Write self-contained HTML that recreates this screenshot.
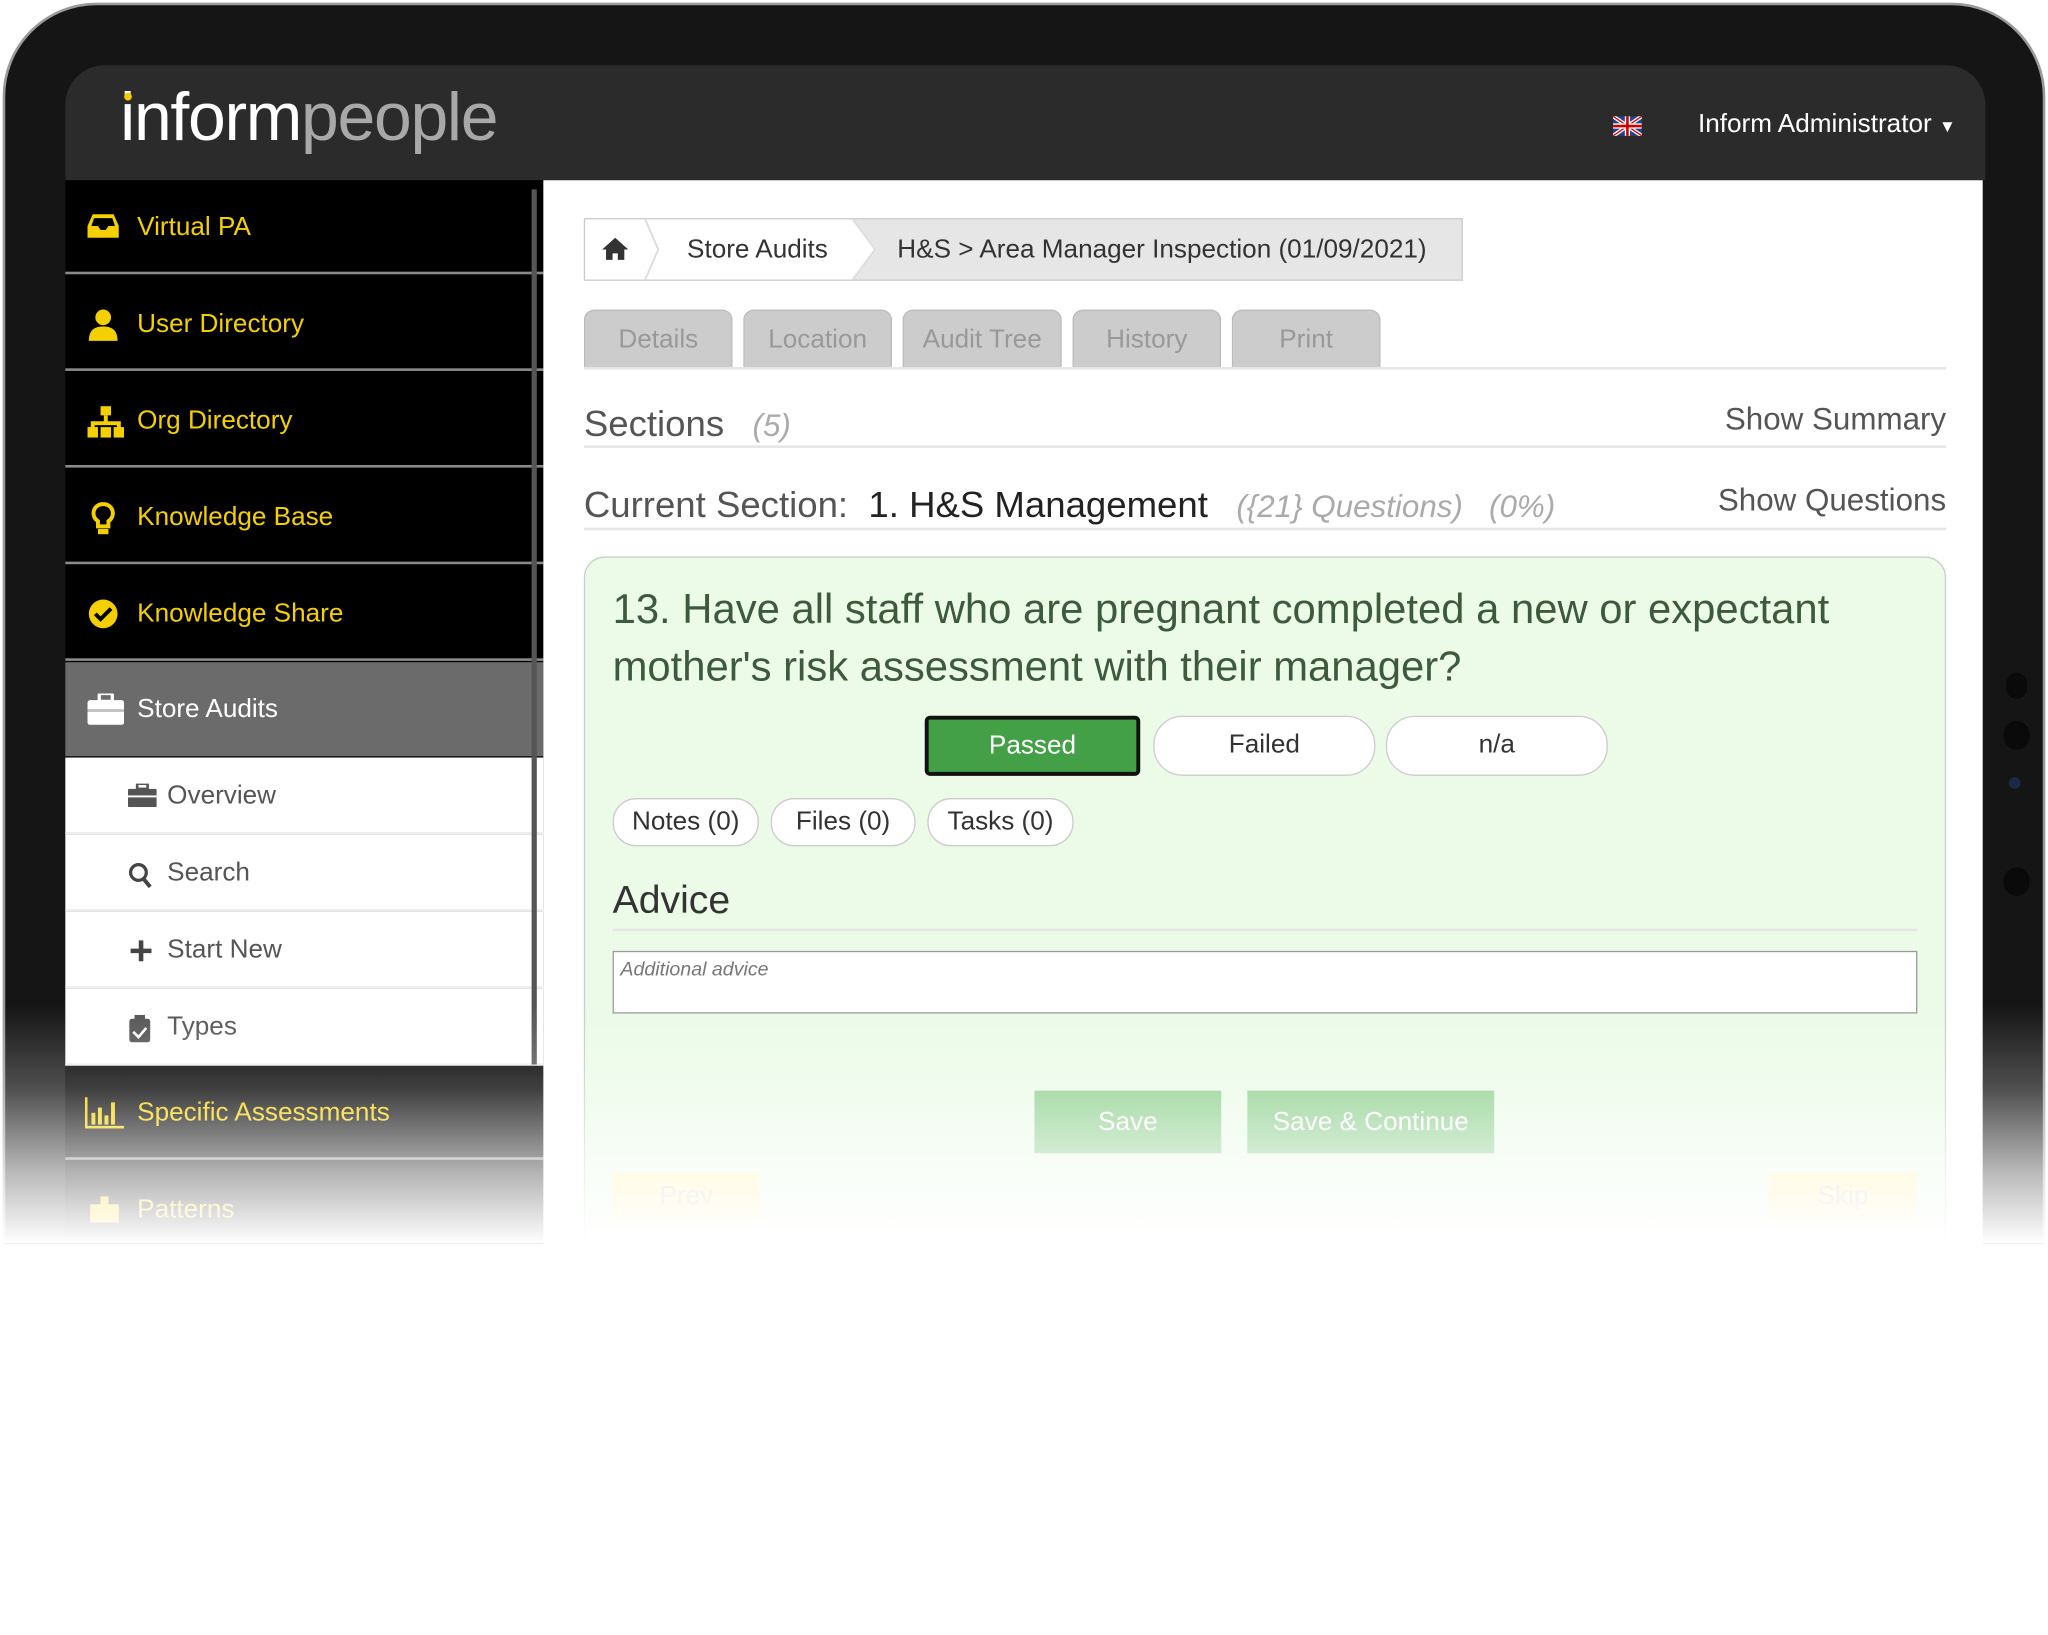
<!DOCTYPE html>
<html><head><meta charset="utf-8"><style>
*{box-sizing:border-box;margin:0;padding:0}
html,body{width:2048px;height:1632px;overflow:hidden;background:#fff;font-family:"Liberation Sans",sans-serif}
#s{position:absolute;left:0;top:0;width:1568px;height:1250px;transform:scale(1.30612);transform-origin:0 0}
.a{position:absolute}
.dev{left:2px;top:2px;width:1564px;height:1100px;background:#151515;border-radius:72px;border:2px solid #9a9a9a}
.hdr{left:50px;top:50px;width:1470px;height:88px;background:#2b2b2b;border-radius:30px 30px 0 0}
.side{left:50px;top:138px;width:366px;height:900px;background:#000}
.it{position:absolute;left:50px;width:366px;height:72px;color:#f5d000;font-size:20px;line-height:72px;padding-left:55px;border-bottom:2px solid #8a8a8a}
.it svg{position:absolute;left:17px;top:24px}
.sub{position:absolute;left:50px;width:366px;height:59px;background:#fff;color:#555;font-size:20px;line-height:58px;padding-left:78px;border-bottom:2px solid #eee}
.sub svg{position:absolute;left:48px;top:20px}
.main{left:416px;top:138px;width:1102px;height:900px;background:#fff}
.tab{position:absolute;top:237px;height:45px;background:#ccc;border:1px solid #bbb;border-bottom:none;border-radius:8px 8px 0 0;color:#999;font-size:20px;text-align:center;line-height:45px}
.btn{position:absolute;top:548px;height:46px;border:1.5px solid #ccc;border-radius:22px;background:#fff;color:#333;font-size:20px;text-align:center;line-height:43px}
.pill{position:absolute;top:611px;height:37px;border:1.5px solid #ccc;border-radius:18px;background:#fff;color:#333;font-size:20px;text-align:center;line-height:34px}
.line{position:absolute;height:2px;background:#e6e6e6}
</style></head><body><div id="s">
<div class="a dev"></div>
<div class="a" style="left:1536px;top:515px;width:16px;height:20px;border-radius:8px;background:#0a0a0a"></div>
<div class="a" style="left:1534px;top:552px;width:20px;height:22px;border-radius:10px;background:#0a0a0a"></div>
<div class="a" style="left:1538px;top:595px;width:9px;height:9px;border-radius:5px;background:#1a2a44"></div>
<div class="a" style="left:1534px;top:664px;width:20px;height:22px;border-radius:10px;background:#0a0a0a"></div>
<div class="a hdr"></div>
<div class="a" style="left:92px;top:60px;font-size:52px;font-weight:300;color:#fff;letter-spacing:-1px">inform<span style="color:#a8a8a8">people</span></div>
<div class="a" style="left:95px;top:71px;width:6px;height:6px;border-radius:3px;background:#f5c800"></div>
<svg class="a" style="left:1235px;top:89px" width="22" height="15" viewBox="0 0 22 15"><rect width="22" height="15" fill="#27408b"/><path d="M0 0L22 15M22 0L0 15" stroke="#fff" stroke-width="3"/><path d="M0 0L22 15M22 0L0 15" stroke="#c00" stroke-width="1"/><path d="M11 0V15M0 7.5H22" stroke="#fff" stroke-width="4"/><path d="M11 0V15M0 7.5H22" stroke="#c00" stroke-width="2"/></svg>
<div class="a" style="left:1300px;top:84px;font-size:20px;color:#fff">Inform Administrator <span style="font-size:13px">▼</span></div>
<div class="a side"></div>
<div class="it" style="top:138px"><svg width="24" height="22" viewBox="0 0 24 22"><path d="M4 2h16l4 9v9H0v-9z" fill="#f5d000"/><path d="M5 5h14l2 6h-5l-2 3h-4l-2-3H3z" fill="#000"/></svg>Virtual PA</div>
<div class="it" style="top:212px"><svg width="24" height="26" viewBox="0 0 24 26"><circle cx="12" cy="7" r="6" fill="#f5d000"/><path d="M1 25c0-8 4-11 11-11s11 3 11 11z" fill="#f5d000"/></svg>User Directory</div>
<div class="it" style="top:286px"><svg width="28" height="26" viewBox="0 0 28 26"><rect x="10" y="1" width="8" height="7" fill="#f5d000"/><path d="M14 8v6M4 18v-4h20v4" stroke="#f5d000" stroke-width="3" fill="none"/><rect x="0" y="17" width="8" height="8" fill="#f5d000"/><rect x="10" y="17" width="8" height="8" fill="#f5d000"/><rect x="20" y="17" width="8" height="8" fill="#f5d000"/></svg>Org Directory</div>
<div class="it" style="top:360px"><svg width="24" height="26" viewBox="0 0 24 26"><path d="M12 2a7 7 0 0 0-4 13v4h8v-4a7 7 0 0 0-4-13z" stroke="#f5d000" stroke-width="3" fill="none"/><rect x="8" y="21" width="8" height="4" fill="#f5d000"/></svg>Knowledge Base</div>
<div class="it" style="top:434px"><svg width="24" height="24" viewBox="0 0 24 24"><circle cx="12" cy="12" r="11" fill="#f5d000"/><path d="M6 12l4 4 8-8" stroke="#000" stroke-width="3" fill="none"/></svg>Knowledge Share</div>
<div class="it" style="top:507px;background:#6b6b6b;color:#fff;border-bottom:none"><svg width="28" height="24" viewBox="0 0 28 24"><rect x="9" y="0" width="10" height="6" rx="1" stroke="#fff" stroke-width="2.5" fill="none"/><rect x="0" y="5" width="28" height="19" rx="2" fill="#fff"/><rect x="0" y="12" width="28" height="2" fill="#bbb"/></svg>Store Audits</div>
<div class="sub" style="top:580px"><svg width="22" height="18" viewBox="0 0 22 18"><rect x="7" y="0" width="8" height="4" stroke="#555" stroke-width="2" fill="none"/><rect x="0" y="4" width="22" height="14" rx="1" fill="#555"/><rect x="0" y="9" width="22" height="1.5" fill="#fff"/></svg>Overview</div>
<div class="sub" style="top:639px"><svg width="20" height="22" viewBox="0 0 20 22"><circle cx="8" cy="9" r="6" stroke="#444" stroke-width="2.5" fill="none"/><path d="M12 14l5 6" stroke="#444" stroke-width="3"/></svg>Search</div>
<div class="sub" style="top:698px"><svg width="20" height="20" viewBox="0 0 20 20"><path d="M10 2v16M2 10h16" stroke="#444" stroke-width="3.5"/></svg>Start New</div>
<div class="sub" style="top:757px"><svg width="18" height="22" viewBox="0 0 18 22"><rect x="1" y="3" width="16" height="18" rx="2" fill="#555"/><rect x="5" y="0" width="8" height="5" fill="#555"/><path d="M4 13l4 4 6-7" stroke="#fff" stroke-width="2" fill="none"/></svg>Types</div>
<div class="it" style="top:816px;background:#000"><svg width="30" height="24" viewBox="0 0 30 24" style="left:15px"><path d="M1 0v23h29" stroke="#f5d000" stroke-width="2" fill="none"/><rect x="5" y="12" width="3" height="9" fill="#f5d000"/><rect x="10" y="8" width="3" height="13" fill="#f5d000"/><rect x="15" y="14" width="3" height="7" fill="#f5d000"/><rect x="20" y="4" width="3" height="17" fill="#f5d000"/></svg>Specific Assessments</div>
<div class="it" style="top:890px;background:#000;border-bottom:none"><svg width="28" height="24" viewBox="0 0 28 24"><path d="M2 8h8V2h6v6h8v14H2z" fill="#f5d000"/></svg>Patterns</div>
<div class="a" style="left:407px;top:145px;width:4px;height:670px;background:#555"></div>
<div class="a main"></div>
<!-- breadcrumb -->
<div class="a" style="left:447px;top:167px;width:673px;height:48px;border:1px solid #ccc;background:#e6e6e6"></div>
<svg class="a" style="left:448px;top:168px" width="225" height="46"><path d="M0 0H205L222 23L205 46H0z" fill="#fff"/><path d="M46 0L56 23L46 46M205 0L222 23L205 46" stroke="#ddd" fill="none" stroke-width="1.5"/><path d="M23 14l-10 9h3v8h5v-5h4v5h5v-8h3z" fill="#333"/></svg>
<div class="a" style="left:526px;top:180px;font-size:20px;color:#333">Store Audits</div>
<div class="a" style="left:687px;top:180px;font-size:20px;color:#333">H&amp;S &gt; Area Manager Inspection (01/09/2021)</div>
<!-- tabs -->
<div class="tab" style="left:447px;width:114px">Details</div>
<div class="tab" style="left:569px;width:114px">Location</div>
<div class="tab" style="left:691px;width:122px">Audit Tree</div>
<div class="tab" style="left:821px;width:114px">History</div>
<div class="tab" style="left:943px;width:114px">Print</div>
<div class="line" style="left:447px;top:281px;width:1043px"></div>
<div class="a" style="left:447px;top:309px;font-size:28px;color:#555">Sections <span style="font-size:24px;font-style:italic;color:#aaa;margin-left:14px">(5)</span></div>
<div class="a" style="right:78px;top:308px;font-size:24px;color:#555">Show Summary</div>
<div class="line" style="left:447px;top:341px;width:1043px"></div>
<div class="a" style="left:447px;top:371px;font-size:28px;color:#555;white-space:nowrap">Current Section:&nbsp; <span style="color:#222">1. H&amp;S Management</span> <span style="font-size:24px;font-style:italic;color:#aaa;margin-left:14px">({21} Questions) &nbsp; (0%)</span></div>
<div class="a" style="right:78px;top:370px;font-size:24px;color:#555">Show Questions</div>
<div class="line" style="left:447px;top:404px;width:1043px"></div>
<!-- card -->
<div class="a" style="left:447px;top:426px;width:1043px;height:560px;border:1.5px solid #ccc;border-radius:16px;background:#ebfbe8"></div>
<div class="a" style="left:469px;top:444px;width:1000px;font-size:32px;line-height:44px;color:#3d5a3d">13. Have all staff who are pregnant completed a new or expectant mother's risk assessment with their manager?</div>
<div class="btn" style="left:708px;width:165px;background:#43a047;border:3px solid #111;border-radius:4px;color:#fff;line-height:40px">Passed</div>
<div class="btn" style="left:883px;width:170px">Failed</div>
<div class="btn" style="left:1061px;width:170px">n/a</div>
<div class="pill" style="left:469px;width:112px">Notes (0)</div>
<div class="pill" style="left:590px;width:111px">Files (0)</div>
<div class="pill" style="left:710px;width:112px">Tasks (0)</div>
<div class="a" style="left:469px;top:673px;font-size:30px;color:#333">Advice</div>
<div class="line" style="left:469px;top:711px;width:999px"></div>
<div class="a" style="left:469px;top:728px;width:999px;height:48px;border:1.5px solid #999;background:#fff;font-size:15px;font-style:italic;color:#777;padding:5px">Additional advice</div>
<div class="a" style="left:792px;top:835px;width:143px;height:48px;background:#8fd08f;color:#fff;font-size:20px;text-align:center;line-height:48px">Save</div>
<div class="a" style="left:955px;top:835px;width:189px;height:48px;background:#8fd08f;color:#fff;font-size:20px;text-align:center;line-height:48px">Save &amp; Continue</div>
<div class="a" style="left:469px;top:898px;width:113px;height:37px;background:#fff3b0;color:#ccc;font-size:20px;text-align:center;line-height:37px">Prev</div>
<div class="a" style="left:1354px;top:898px;width:114px;height:37px;background:#fff3b0;color:#ccc;font-size:20px;text-align:center;line-height:37px">Skip</div>
<!-- fade -->
<div class="a" style="left:0;top:770px;width:1568px;height:182px;background:linear-gradient(to bottom,rgba(255,255,255,0) 0%,rgba(255,255,255,.25) 35%,rgba(255,255,255,.7) 70%,#fff 100%)"></div>
<div class="a" style="left:0;top:952px;width:1568px;height:300px;background:#fff"></div>
</div></body></html>
